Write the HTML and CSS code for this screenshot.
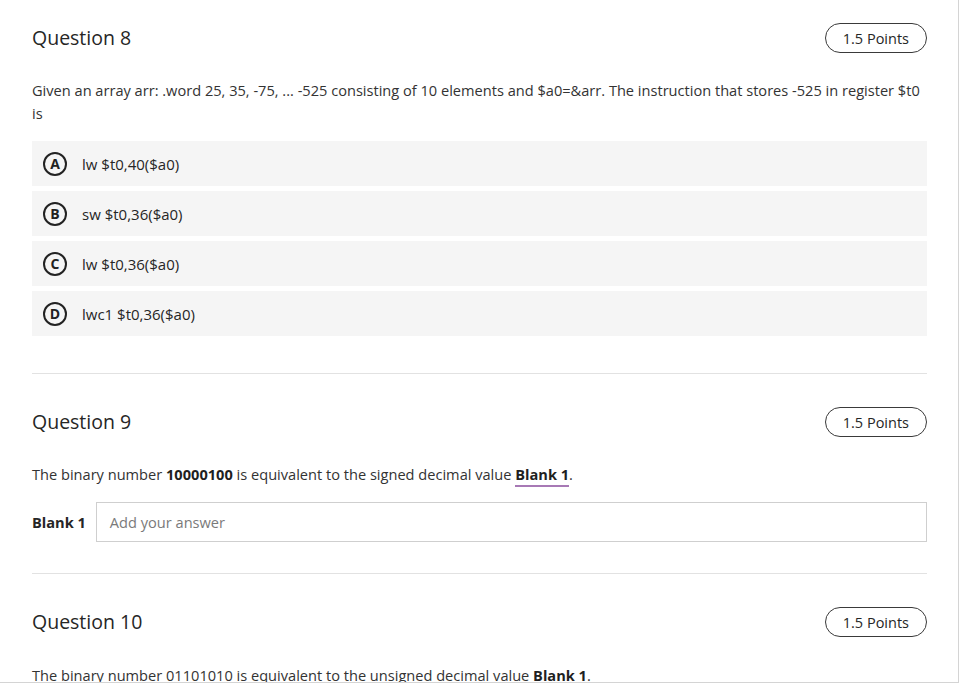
FILE: index.html
```html
<!DOCTYPE html>
<html>
<head>
<meta charset="utf-8">
<link rel="stylesheet" href="styles.css">
</head>
<body>
<div class="frame">
  <div class="content">
    <section class="question q8">
      <div class="q-head">
        <h2 class="q-title">Question 8</h2>
        <span class="pill">1.5 Points</span>
      </div>
      <p class="q-text">Given an array arr: .word 25, 35, -75, ... -525 consisting of 10 elements and $a0=&amp;arr. The instruction that stores -525 in register $t0 is</p>
      <div class="options">
        <div class="option"><span class="letter">A</span><span class="opt-text">lw $t0,40($a0)</span></div>
        <div class="option"><span class="letter">B</span><span class="opt-text">sw $t0,36($a0)</span></div>
        <div class="option"><span class="letter">C</span><span class="opt-text">lw $t0,36($a0)</span></div>
        <div class="option"><span class="letter">D</span><span class="opt-text">lwc1 $t0,36($a0)</span></div>
      </div>
    </section>
    <hr class="sep sep1">
    <section class="question q9">
      <div class="q-head">
        <h2 class="q-title">Question 9</h2>
        <span class="pill">1.5 Points</span>
      </div>
      <p class="q-text">The binary number <b>10000100</b> is equivalent to the signed decimal value <b class="blank">Blank 1</b>.</p>
      <div class="answer-row">
        <label class="blank-label">Blank 1</label>
        <div class="answer-box">Add your answer</div>
      </div>
    </section>
    <hr class="sep sep2">
    <section class="question q10">
      <div class="q-head">
        <h2 class="q-title">Question 10</h2>
        <span class="pill">1.5 Points</span>
      </div>
      <p class="q-text">The binary number 01101010 is equivalent to the unsigned decimal value <b>Blank 1</b>.</p>
    </section>
  </div>
</div>
</body>
</html>
```

FILE: styles.css
```css
* { box-sizing: border-box; }
html, body {
  margin: 0;
  padding: 0;
  background: #ffffff;
}
body {
  font-family: "Open Sans", "Noto Sans", sans-serif;
  color: #262626;
}
.frame {
  width: 959px;
  height: 683px;
  border-right: 1px solid #d4d4d4;
  border-bottom: 1px solid #d4d4d4;
  overflow: hidden;
}
.content {
  padding: 23px 31px 0 32px;
}
.q-head {
  display: flex;
  justify-content: space-between;
  align-items: center;
  height: 30px;
}
.q-title {
  margin: 0;
  font-size: 19.5px;
  font-weight: 400;
  color: #262626;
  line-height: 28px;
}
.pill {
  display: inline-flex;
  align-items: center;
  height: 30px;
  padding: 0 17px;
  border: 1px solid #3a3a3a;
  border-radius: 15px;
  font-size: 14.5px;
  color: #262626;
}
.q-text {
  margin: 26px 0 0;
  font-size: 14.6px;
  line-height: 23px;
  color: #333333;
}
.q-text b { font-weight: 700; color: #1f1f1f; }
.blank {
  border-bottom: 2px solid #a779b5;
  padding-bottom: 1px;
}
.options {
  margin-top: 16px;
  display: flex;
  flex-direction: column;
  gap: 5px;
}
.option {
  display: flex;
  align-items: center;
  height: 45px;
  background: #f5f5f5;
  padding-left: 11px;
  gap: 15px;
}
.letter {
  flex: 0 0 24px;
  width: 24px;
  height: 24px;
  border: 2px solid #222222;
  border-radius: 50%;
  display: inline-flex;
  align-items: center;
  justify-content: center;
  font-size: 14px;
  font-weight: 700;
  line-height: 1;
  color: #222222;
}
.opt-text {
  font-size: 15px;
  color: #262626;
}
.sep {
  border: 0;
  height: 1px;
  background: #e2e2e2;
  margin: 0;
}
.sep1 { margin-top: 37px; }
.sep2 { margin-top: 31px; }
.q9, .q10 { margin-top: 33px; }
.q10 .q-text { margin-top: 27px; }
.answer-row {
  display: flex;
  align-items: center;
  margin-top: 16px;
  gap: 10px;
}
.blank-label {
  font-size: 14.6px;
  font-weight: 700;
  color: #262626;
}
.answer-box {
  flex: 1;
  height: 40px;
  border: 1px solid #cfcfcf;
  display: flex;
  align-items: center;
  padding-left: 13px;
  font-size: 14.6px;
  color: #7a7a7a;
}
```
